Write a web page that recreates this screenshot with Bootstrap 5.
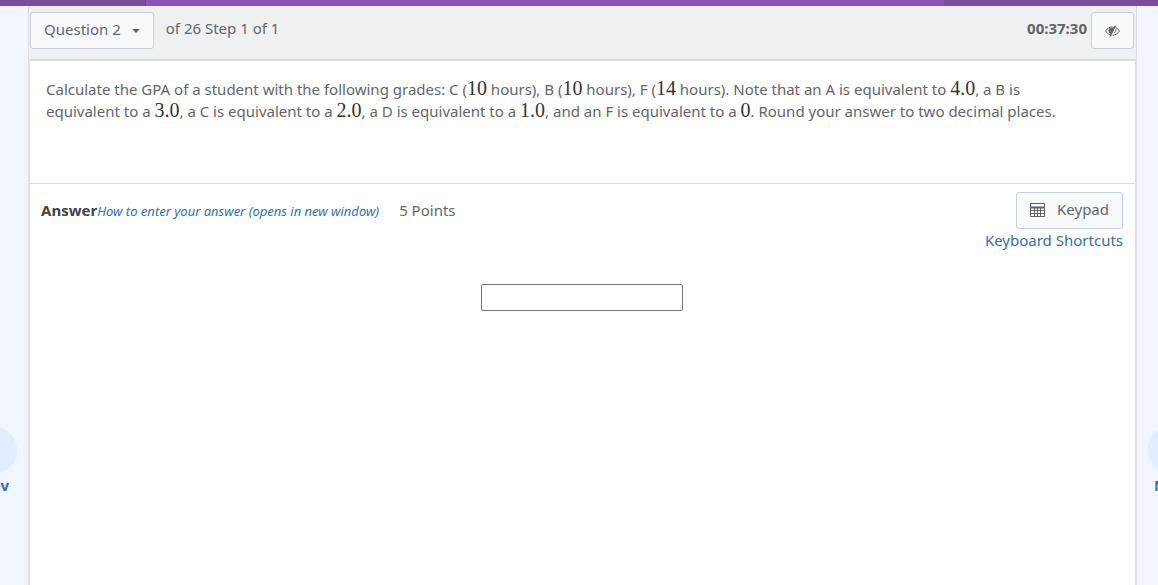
<!DOCTYPE html>
<html lang="en">
<head>
<meta charset="utf-8">
<meta name="viewport" content="width=device-width, initial-scale=1">
<title>Question 2</title>
<link href="https://cdn.jsdelivr.net/npm/bootstrap@5.3.0/dist/css/bootstrap.min.css" rel="stylesheet">
<style>
  body { font-family: "Noto Sans", "Open Sans", sans-serif; font-size: 15px; line-height: 22px; color: #636569; background: #f0f5fe; }
  a { color: #3470a8; text-decoration: none; }
  .top-strip { height: 6px; background: #7b4d9f; }
  .top-strip .filled { width: 69%; margin-left: 145px; background: #8755b8; border-left: 1px solid #6c4290; }
  .side { overflow: hidden; padding-top: 420px; }
  .side-prev { width: 28px; }
  .side-next { width: 21px; }
  .side a { width: 48px; font-weight: 700; }
  .side-prev a { margin-left: -31px; }
  .side-next a { margin-left: 11px; }
  .side .disc { width: 48px; height: 48px; background: #e1edfe; }
  .side-next .word { padding-left: 6px; }
  .question-bar { background: #eff0f2; border: 1px solid #dadce0; border-width: 0 1px 2px; padding: 6px 2px 10px 1px; }
  .question-bar .label { padding-top: 5px; }
  .tool-btn { --bs-btn-color: #636569; --bs-btn-bg: #f7f9fb; --bs-btn-border-color: #c8d0d7; --bs-btn-border-radius: 3px; --bs-btn-font-size: 15px; --bs-btn-line-height: 23px; --bs-btn-padding-x: 13px; --bs-btn-hover-bg: #eceff2; --bs-btn-hover-border-color: #b8c0c8; }
  .question-bar .tool-btn, .answer-head .tool-btn { padding-top: 5px; padding-bottom: 7px; }
  .tool-btn.dropdown-toggle::after { margin-left: 11px; border-width: 4px 4px 0; vertical-align: 2px; }
  .pane { border: 2px solid #dfe0e4; border-width: 0 2px; }
  .prompt { padding: 17px 48px 61px 16px; border-bottom: 1px solid #dcdddf; }
  .math { font-family: "Liberation Serif", serif; font-size: 20px; line-height: 1; color: #333; }
  .answer-head { padding: 8px 12px 0 11px; }
  .answer-head strong { color: #424346; }
  .answer-note { padding-top: 7px; }
  .answer-points { padding-top: 7px; margin-left: 20px; }
  .help-link { font-size: 13px; }
  .answer-box { width: 202px; height: 27px; border: 1px solid #767676; border-radius: 2px; margin: 33px 2px 0 0; }
</style>
</head>
<body class="d-flex flex-column min-vh-100">
<div class="top-strip d-flex"><div class="filled"></div></div>
<div class="d-flex flex-grow-1">
  <nav class="side side-prev flex-shrink-0" aria-label="Previous question">
    <a href="#" class="d-flex flex-column align-items-end"><span class="disc rounded-circle"></span><span class="pe-2">Prev</span></a>
  </nav>
  <main class="flex-grow-1 d-flex flex-column">
    <header class="question-bar d-flex align-items-start">
      <div class="dropdown">
        <button class="btn tool-btn dropdown-toggle" type="button" data-bs-toggle="dropdown" aria-expanded="false">Question 2</button>
        <ul class="dropdown-menu"><li><a class="dropdown-item" href="#">Question 1</a></li><li><a class="dropdown-item" href="#">Question 3</a></li></ul>
      </div>
      <span class="label ms-2 ps-1">of 26 Step 1 of 1</span>
      <strong class="label ms-auto me-1">00:37:30</strong>
      <button class="btn tool-btn" type="button" aria-label="Hide timer">
        <svg width="15" height="12" viewBox="0 0 15 12" fill="none" stroke="#5f6166"><path d="M.6 6C2.500 3 5 1.800 7.500 1.800M10.500 2.500C12 3.200 13.400 4.400 14.400 6c-1.600 2.600-4 4.200-6.900 4.200M.6 6c1 1.700 2.600 3.100 4.400 3.800"/><path d="M5 11.500 10.500.5" stroke-width="1.500"/><path d="M4.500 3.500C3.600 6 4.200 7.800 5.600 8.700L8.600 2.700Z" fill="#5f6166"/><path d="M10.800 4.500c.2 1.700-.3 2.700-1.500 3.500"/></svg>
      </button>
    </header>
    <div class="pane bg-white flex-grow-1">
      <section class="prompt">
        Calculate the GPA of a student with the following grades: C (<span class="math">10</span> hours), B (<span class="math">10</span> hours), F (<span class="math">14</span> hours). Note that an A is equivalent to <span class="math">4.0</span>, a B is equivalent to a <span class="math">3.0</span>, a C is equivalent to a <span class="math">2.0</span>, a D is equivalent to a <span class="math">1.0</span>, and an F is equivalent to a <span class="math">0</span>. Round your answer to two decimal places.
      </section>
      <section>
        <div class="answer-head d-flex align-items-start">
          <div class="answer-note"><label for="answer"><strong>Answer</strong></label><a href="#" class="help-link fst-italic">How to enter your answer (opens in new window)</a></div>
          <span class="answer-points">5 Points</span>
          <div class="ms-auto d-flex flex-column align-items-end">
            <button class="btn tool-btn d-flex align-items-center" type="button">
              <svg class="me-2" width="15" height="16" viewBox="0 0 15 16" fill="none" stroke="#5f6166"><path d="M.5 1.500h14v13H.5z"/><path d="M1 5.500h13" stroke-width="2"/><path d="M1 8.500h13M1 11.500h13M4.500 5.500v9M7.500 5.500v9M10.500 5.500v9"/></svg><span class="ms-1">Keypad</span>
            </button>
            <a href="#">Keyboard Shortcuts</a>
          </div>
        </div>
        <div class="text-center"><input id="answer" class="answer-box" type="text"></div>
      </section>
    </div>
  </main>
  <nav class="side side-next flex-shrink-0" aria-label="Next question">
    <a href="#" class="d-flex flex-column"><span class="disc rounded-circle"></span><span class="word">Next</span></a>
  </nav>
</div>
<script src="https://cdn.jsdelivr.net/npm/bootstrap@5.3.0/dist/js/bootstrap.bundle.min.js"></script>
</body>
</html>
